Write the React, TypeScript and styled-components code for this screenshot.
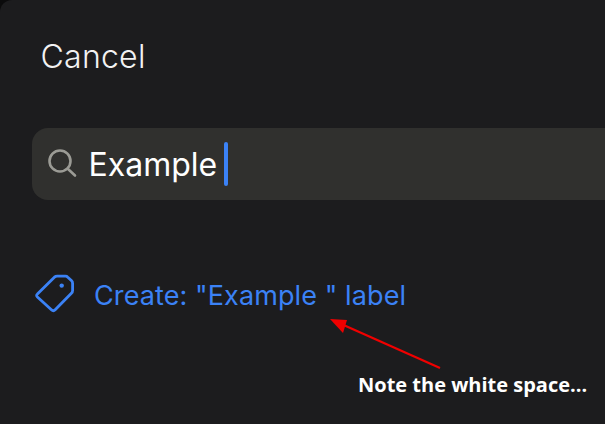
import styled, { createGlobalStyle } from "styled-components";

const Global = createGlobalStyle`
  html, body {
    margin: 0;
    padding: 0;
    background: #0b0b0c;
  }
`;

const Sheet = styled.div`
  width: 605px;
  height: 424px;
  box-sizing: border-box;
  background: #1c1c1e;
  border-top-left-radius: 12px;
  overflow: hidden;
  display: flex;
  flex-direction: column;
  font-family: Inter, "Liberation Sans", sans-serif;
`;

const Cancel = styled.div`
  margin: 39px 0 0 40.5px;
  font-size: 32px;
  font-weight: 300;
  letter-spacing: 0.25px;
  line-height: 36px;
  color: #f2f2f3;
`;

const SearchBar = styled.div`
  margin: 53px 0 0 32px;
  height: 72px;
  background: #30302e;
  border-radius: 16px 0 0 16px;
  display: flex;
  align-items: center;
  padding-left: 15px;
`;

const SearchText = styled.span`
  margin-left: 9.5px;
  font-size: 32px;
  color: #ffffff;
`;

const Caret = styled.span`
  width: 4px;
  height: 44px;
  margin-left: 6.5px;
  border-radius: 2px;
  background: #3b82f6;
`;

const CreateRow = styled.div`
  margin: 74px 0 0 34px;
  display: flex;
  align-items: center;
  gap: 20px;
`;

const CreateText = styled.span`
  margin-top: 2px;
  font-size: 27px;
  letter-spacing: 0.1px;
  color: #3b82f6;
  white-space: pre;
`;

const NoteArea = styled.div`
  position: relative;
  flex: 1;
`;

const Arrow = styled.svg`
  position: absolute;
  left: 325px;
  top: 0;
`;

const Note = styled.div`
  position: absolute;
  left: 358px;
  top: 57px;
  font-family: "Open Sans", sans-serif;
  font-weight: 700;
  font-size: 20px;
  line-height: 27px;
  color: #ffffff;
  white-space: nowrap;
`;

export default function App() {
  return (
    <>
      <Global />
      <Sheet>
        <Cancel>Cancel</Cancel>
        <SearchBar>
          <svg width="32" height="32" viewBox="0 0 32 32" fill="none" stroke="#9b9b95" strokeWidth="2.6" strokeLinecap="round">
            <circle cx="13" cy="13" r="10.5" />
            <path d="M21 21 L28 27.5" />
          </svg>
          <SearchText>Example</SearchText>
          <Caret />
        </SearchBar>
        <CreateRow>
          <svg width="40" height="40" viewBox="0 0 40 40" fill="none" stroke="#3b82f6" strokeWidth="2.8" strokeLinejoin="round">
            <path d="M3.4 20 L20.4 3.2 Q21.6 2.2 23.2 2.2 L31.4 2.2 Q32.8 2.2 33.8 3.2 L37.6 6.8 Q38.6 7.8 38.6 9.4 L38.6 16.4 Q38.6 18 37.4 19.2 L21.2 35.8 Q19.4 37.6 17.4 35.8 L3.4 23 Q1.8 21.5 3.4 20 Z" />
            <circle cx="27.7" cy="11.6" r="2.2" fill="#3b82f6" stroke="none" />
          </svg>
          <CreateText>Create: "Example " label</CreateText>
        </CreateRow>
        <NoteArea>
          <Arrow width="120" height="60" viewBox="0 0 120 60">
            <path d="M115 54 L14 9" stroke="#f00000" strokeWidth="2.2" fill="none" />
            <path d="M5 5 L22 6 L18 19 Z" fill="#f00000" />
          </Arrow>
          <Note>Note the white space...</Note>
        </NoteArea>
      </Sheet>
    </>
  );
}
